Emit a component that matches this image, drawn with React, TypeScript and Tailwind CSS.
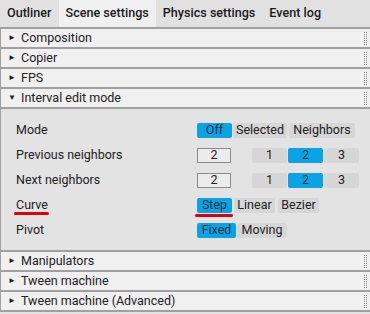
import React from 'react';

const font = { fontFamily: 'Roboto, "Liberation Sans", sans-serif' };

function Grip() {
  const dots = [];
  for (let y = 0; y < 7; y++) {
    dots.push(<rect key={`a${y}`} x={0} y={y * 2} width={1} height={1} fill="#8a8a8a" />);
    dots.push(<rect key={`b${y}`} x={2} y={y * 2} width={1} height={1} fill="#8a8a8a" />);
  }
  return (
    <svg width="3" height="13" className="ml-auto mr-[3px]">
      {dots}
    </svg>
  );
}

function SectionHeader({ title, open }: { title: string; open?: boolean }) {
  return (
    <div className="flex h-[20px] items-center border-t-2 border-[#a0a0a0] bg-[#f0f0f0] pl-[7px] text-[12.5px] text-[#222]">
      <span className="w-[13px] text-[8px] leading-none">{open ? '▼' : '►'}</span>
      <span>{title}</span>
      <Grip />
    </div>
  );
}

function Btn({ label, active, w }: { label: string; active?: boolean; w: string }) {
  return (
    <div
      className={`flex h-[15px] items-center justify-center rounded-[2px] text-[12.5px] leading-none ${
        active ? 'bg-[#0aa3e6] text-[#1b3340]' : 'bg-[#d6d6d6] text-[#222]'
      } ${w}`}
    >
      {label}
    </div>
  );
}

function Row({ label, mark, children }: { label: string; mark?: boolean; children: React.ReactNode }) {
  return (
    <div className="flex h-[25px] items-center">
      <div className="w-[181px] text-[12.5px] text-[#222]">
        <span className="relative">
          {label}
          {mark && <span className="absolute -left-[2px] -right-[1px] top-[15px] h-[3px] rounded-full bg-[#e0000b]" />}
        </span>
      </div>
      {children}
    </div>
  );
}

function NumberRow({ label }: { label: string }) {
  return (
    <Row label={label}>
      <div className="flex items-center">
        <div className="flex h-[15px] w-[34px] items-center justify-center border border-[#8a8a8a] bg-[#ececec] text-[12.5px] leading-none text-[#222]">
          2
        </div>
        <div className="ml-[21px] flex gap-[1px]">
          <Btn label="1" w="w-[35px]" />
          <Btn label="2" active w="w-[35px]" />
          <Btn label="3" w="w-[35px]" />
        </div>
      </div>
    </Row>
  );
}

export default function App() {
  const tabs = ['Outliner', 'Scene settings', 'Physics settings', 'Event log'];
  return (
    <div className="h-[314px] w-[370px] overflow-hidden bg-[#e3e3e3]" style={font}>
      <div className="flex h-[27px] items-stretch bg-[#e1e1e1]">
        {tabs.map((t) => (
          <div
            key={t}
            className={`flex items-center px-[7px] text-[12.6px] font-medium text-[#1a1a1a] ${
              t === 'Scene settings' ? 'bg-[#f0f0f0]' : ''
            }`}
          >
            {t}
          </div>
        ))}
      </div>
      <div className="border-l border-[#a0a0a0]">
        <SectionHeader title="Composition" />
        <SectionHeader title="Copier" />
        <SectionHeader title="FPS" />
        <SectionHeader title="Interval edit mode" open />
        <div className="h-[143px] border-t-2 border-[#a0a0a0] bg-[#e3e3e3] pl-[15px] pt-[9px]">
          <Row label="Mode">
            <div className="flex">
              <Btn label="Off" active w="w-[35px]" />
              <Btn label="Selected" w="ml-[1px] w-[54px]" />
              <Btn label="Neighbors" w="ml-[2px] w-[66px]" />
            </div>
          </Row>
          <NumberRow label="Previous neighbors" />
          <NumberRow label="Next neighbors" />
          <Row label="Curve" mark>
            <div className="flex">
              <div className="relative">
                <Btn label="Step" active w="w-[35px]" />
                <span className="absolute -left-[2px] -right-[1px] top-[16px] h-[3px] rounded-full bg-[#e0000b]" />
              </div>
              <Btn label="Linear" w="ml-[2px] w-[41px]" />
              <Btn label="Bezier" w="ml-[3px] w-[41px]" />
            </div>
          </Row>
          <Row label="Pivot">
            <div className="flex">
              <Btn label="Fixed" active w="w-[39px]" />
              <Btn label="Moving" w="ml-[1px] w-[50px]" />
            </div>
          </Row>
        </div>
        <SectionHeader title="Manipulators" />
        <SectionHeader title="Tween machine" />
        <SectionHeader title="Tween machine (Advanced)" />
        <div className="border-t-2 border-[#a0a0a0]" />
      </div>
    </div>
  );
}
